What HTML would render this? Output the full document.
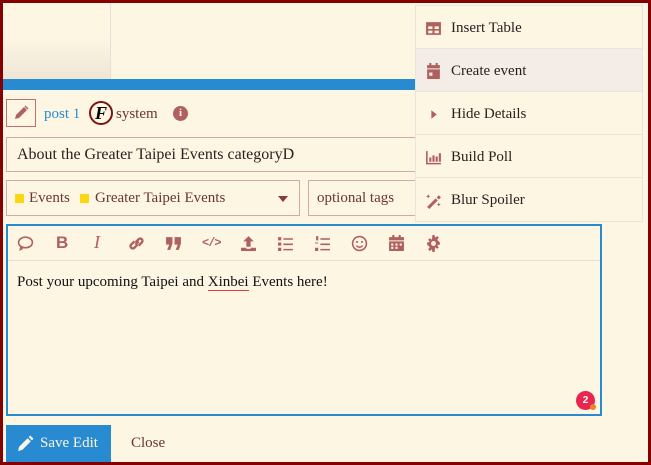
<!DOCTYPE html>
<html><head><style>
*{box-sizing:border-box;margin:0;padding:0}
body{width:651px;height:465px;overflow:hidden;background:#fdf6e3;font-family:"Liberation Serif",serif;position:relative}
.frame{position:absolute;inset:0;border:3px solid #850000;pointer-events:none;z-index:10}
.abs{position:absolute}
.box{border:1px solid #d4a8a3;position:absolute}
.ic{fill:#b0605e}
.menu{position:absolute;left:415px;top:5px;width:228px;height:217px;background:#fdf6e3;border:1px solid #ece3da;z-index:5}
.mi{height:43px;border-bottom:1px solid #eee3da;display:flex;align-items:center;padding-left:9px;font-size:15px;color:#2a2020;padding-top:2px}
.mi svg{width:17px;height:17px;margin-right:9px;flex:none}
.tb svg{position:absolute;top:235px;width:17px;height:17px}
</style></head><body>
<div class="abs" style="left:3px;top:3px;width:107px;height:76px;background:linear-gradient(#fdf6e3 45%,#efe6d5)"></div>
<div class="abs" style="left:110px;top:3px;width:1px;height:76px;background:#eadbd8"></div>
<div class="abs" style="left:3px;top:79px;width:415px;height:11px;background:#288bd2"></div>

<div class="box" style="left:6px;top:99px;width:30px;height:28px;border-color:#c07070"></div>
<svg class="abs" style="left:13px;top:105px" width="16" height="16" viewBox="0 0 16 16"><path class="ic" d="M2 14l1-4 8-8 3 3-8 8zM11.5 1.5l3 3 1-1-3-3z"/></svg>
<div class="abs" style="left:44px;top:106px;font-size:15px;color:#288bd2">post 1</div>
<div class="abs" style="left:89px;top:101px;width:24px;height:24px;border:2px solid #7a1414;border-radius:50%;font-size:18px;font-style:italic;font-weight:bold;text-align:center;line-height:21px">F</div>
<div class="abs" style="left:116px;top:106px;font-size:15px;color:#6a3535">system</div>
<div class="abs" style="left:173px;top:106px;width:15px;height:15px;border-radius:50%;background:#b0605e;color:#fdf6e3;font-size:11px;font-weight:bold;text-align:center;line-height:15px">i</div>

<div class="box" style="left:6px;top:137px;width:420px;height:35px"></div>
<div class="abs" style="left:17px;top:146px;font-size:16px;color:#2a2020">About the Greater Taipei Events categoryD</div>

<div class="box" style="left:6px;top:180px;width:294px;height:36px"></div>
<div class="abs" style="left:15px;top:194px;width:9px;height:9px;background:#fbd613"></div>
<div class="abs" style="left:29px;top:190px;font-size:15px;color:#6a3535">Events</div>
<div class="abs" style="left:80px;top:194px;width:9px;height:9px;background:#fbd613"></div>
<div class="abs" style="left:95px;top:190px;font-size:15px;color:#6a3535">Greater Taipei Events</div>
<div class="abs" style="left:278px;top:196px;width:0;height:0;border-left:5px solid transparent;border-right:5px solid transparent;border-top:6px solid #8a3a3a"></div>
<div class="box" style="left:308px;top:180px;width:120px;height:36px"></div>
<div class="abs" style="left:317px;top:190px;font-size:15px;color:#6a3535">optional tags</div>

<div class="abs" style="left:6px;top:224px;width:596px;height:192px;border:2px solid #288bd2"></div>
<div class="abs" style="left:8px;top:260px;width:592px;height:1px;background:#eadbd8"></div>
<div class="tb">
<svg style="left:17px" viewBox="0 0 16 16"><ellipse cx="8" cy="7" rx="6.5" ry="5" fill="none" stroke="#b0605e" stroke-width="1.5"/><path class="ic" d="M3 11l-1 4 4-2z"/></svg>
<div class="abs" style="left:56px;top:233px;font:bold 17px 'Liberation Sans',sans-serif;color:#b0605e">B</div>
<div class="abs" style="left:94px;top:232px;font:italic 18px 'Liberation Serif',serif;color:#b0605e">I</div>
<svg style="left:128px" viewBox="0 0 16 16"><path d="M7 9l3-3M6 6l-3 3a2 2 0 003 3l3-3M10 10l3-3a2 2 0 00-3-3l-3 3" fill="none" stroke="#b0605e" stroke-width="2.2"/></svg>
<svg style="left:165px" viewBox="0 0 16 16"><path class="ic" d="M1 2h6v6l-2 6H2l2-5H1zM9 2h6v6l-2 6h-3l2-5H9z"/></svg>
<div class="abs" style="left:202px;top:236px;font:bold 12px 'Liberation Mono',monospace;color:#b0605e;letter-spacing:-1px">&lt;/&gt;</div>
<svg style="left:240px" viewBox="0 0 16 16"><path class="ic" d="M8 1l5 5h-3v5H6V6H3zM1 12h5v1h4v-1h5v3H1z"/></svg>
<svg style="left:277px" viewBox="0 0 16 16"><path class="ic" d="M1 2h3v3H1zM1 7h3v3H1zM1 12h3v3H1zM6 3h9v1.5H6zM6 8h9v1.5H6zM6 13h9v1.5H6z"/></svg>
<svg style="left:314px" viewBox="0 0 16 16"><path class="ic" d="M2 1h2v4H2zM1 7h3v1H1zM1 12h3v3H1zM6 3h9v1.5H6zM6 8h9v1.5H6zM6 13h9v1.5H6z"/></svg>
<svg style="left:351px" viewBox="0 0 16 16"><circle cx="8" cy="8" r="6.5" fill="none" stroke="#b0605e" stroke-width="1.5"/><circle class="ic" cx="5.7" cy="6.5" r="1"/><circle class="ic" cx="10.3" cy="6.5" r="1"/><path d="M5 10q3 3 6 0" fill="none" stroke="#b0605e" stroke-width="1.3"/></svg>
<svg style="left:388px" viewBox="0 0 16 16"><path class="ic" d="M4 0h2v3H4zM10 0h2v3h-2zM1 2h14v3H1zM1 6h14v9H1z"/><path d="M3 8h2v2H3zM7 8h2v2H7zM11 8h2v2h-2zM3 11h2v2H3zM7 11h2v2H7z" fill="#fdf6e3"/></svg>
<svg style="left:425px" viewBox="0 0 16 16"><path class="ic" d="M7 0h2l.5 2.5 2-1.5 1.5 1.5-1.5 2L14 7v2l-2.5.5 1.5 2-1.5 1.5-2-1.5L9 16H7l-.5-2.5-2 1.5L3 13.5l1.5-2L2 9V7l2.5-.5-1.5-2L4.5 3l2 1.5z"/><circle cx="8" cy="8" r="2.3" fill="#fdf6e3"/></svg>
</div>
<div class="abs" style="left:17px;top:274px;font-size:15px;color:#111">Post your upcoming Taipei and <span style="border-bottom:1.5px solid #e04040;display:inline-block;line-height:16px">Xinbei</span> Events here!</div>
<div class="abs" style="left:576px;top:391px;width:19px;height:19px;border-radius:50%;background:#e8264f;color:#fff;font:bold 10px 'Liberation Sans',sans-serif;text-align:center;line-height:19px">2</div>
<div class="abs" style="left:590px;top:404px;width:6px;height:6px;border-radius:50%;background:#f08030"></div>

<div class="abs" style="left:6px;top:425px;width:105px;height:37px;background:#288bd2"></div>
<svg class="abs" style="left:17px;top:435px" width="17" height="17" viewBox="0 0 16 16"><path fill="#fdf6e3" d="M1 15l1-4 8-8 3 3-8 8zM11 2l3 3 1.5-1.5-3-3z"/></svg>
<div class="abs" style="left:40px;top:435px;font-size:15px;color:#fdf6e3">Save Edit</div>
<div class="abs" style="left:131px;top:435px;font-size:15px;color:#6a3535">Close</div>

<div class="menu">
<div class="mi"><svg viewBox="0 0 16 16"><path class="ic" d="M1 2h14v12H1z"/><path d="M3 6h4v2.5H3zM9 6h4v2.5H9zM3 10h4v2.5H3zM9 10h4v2.5H9z" fill="#fdf6e3"/></svg>Insert Table</div>
<div class="mi" style="background:#f4ece6"><svg viewBox="0 0 16 16"><path class="ic" d="M4 0h2v3H4zM10 0h2v3h-2zM2 2h12v3H2zM2 6h12v9H2z"/><path d="M4 9h3v3H4z" fill="#f4ece6"/></svg>Create event</div>
<div class="mi"><svg viewBox="0 0 16 16"><path class="ic" d="M6 4l5 4-5 4z"/></svg>Hide Details</div>
<div class="mi"><svg viewBox="0 0 16 16"><path class="ic" d="M1 2h1.5v11H15v1.5H1zM4 8h2v4H4zM7 6h2v6H7zM10 7h2v5h-2zM13 4h2v8h-2z"/></svg>Build Poll</div>
<div class="mi" style="border-bottom:none"><svg viewBox="0 0 16 16"><path class="ic" d="M2 14l8-8 2 2-8 8zM11 5l2 2 2-2-2-2zM3 2l.7 1.5L5 4l-1.3.7L3 6l-.7-1.3L1 4l1.3-.5zM13 10l.6 1.2 1.2.6-1.2.6L13 13.6l-.6-1.2-1.2-.6 1.2-.6z"/></svg>Blur Spoiler</div>
</div>
<div class="frame"></div>
</body></html>
